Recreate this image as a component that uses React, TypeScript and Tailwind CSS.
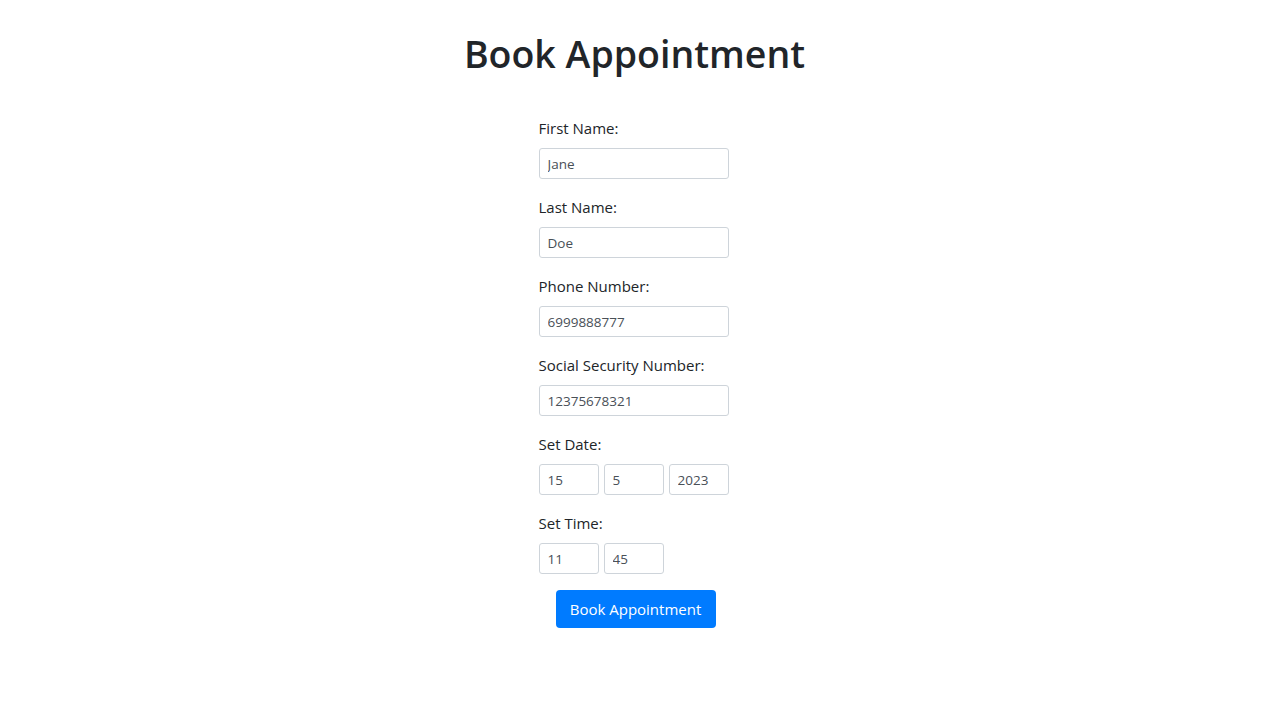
const fields = [
  { label: "First Name:", value: "Jane" },
  { label: "Last Name:", value: "Doe" },
  { label: "Phone Number:", value: "6999888777" },
  { label: "Social Security Number:", value: "12375678321" },
]

function Field({ value, className }: { value: string; className: string }) {
  return (
    <input
      readOnly
      value={value}
      className={`h-[31px] rounded-[3px] border border-[#ced4da] bg-white px-2 text-[13.5px] text-[#495057] outline-none ${className}`}
    />
  )
}

export default function App() {
  return (
    <div className="min-h-screen bg-white pr-[15px] font-['Open_Sans',sans-serif] text-[#212529]">
      <h1 className="pt-[30px] text-center text-[37.5px] font-semibold leading-[48px]">
        Book Appointment
      </h1>

      <form className="mx-auto mt-[38px] flex w-[190px] -translate-x-px flex-col">
        {fields.map((f) => (
          <div key={f.label} className="mb-4 flex flex-col">
            <label className="mb-2 text-[15px] leading-6">{f.label}</label>
            <Field value={f.value} className="w-[190px]" />
          </div>
        ))}

        {/* Date */}
        <div className="mb-4 flex flex-col">
          <label className="mb-2 text-[15px] leading-6">Set Date:</label>
          <div className="flex gap-[5px]">
            <Field value="15" className="w-[60px]" />
            <Field value="5" className="w-[60px]" />
            <Field value="2023" className="w-[60px]" />
          </div>
        </div>

        {/* Time */}
        <div className="mb-4 flex flex-col">
          <label className="mb-2 text-[15px] leading-6">Set Time:</label>
          <div className="flex gap-[5px]">
            <Field value="11" className="w-[60px]" />
            <Field value="45" className="w-[60px]" />
          </div>
        </div>

        <button
          type="button"
          className="ml-[17px] h-[38px] w-[160px] rounded-[4px] bg-[#007bff] text-[15px] text-white"
        >
          Book Appointment
        </button>
      </form>
    </div>
  )
}
